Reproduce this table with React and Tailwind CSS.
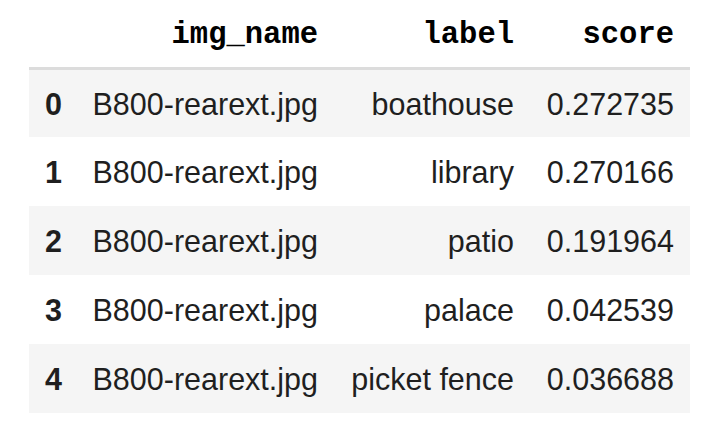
const rows = [
  ['0', 'B800-rearext.jpg', 'boathouse', '0.272735'],
  ['1', 'B800-rearext.jpg', 'library', '0.270166'],
  ['2', 'B800-rearext.jpg', 'patio', '0.191964'],
  ['3', 'B800-rearext.jpg', 'palace', '0.042539'],
  ['4', 'B800-rearext.jpg', 'picket fence', '0.036688'],
];

function App() {
  return (
    <main className="w-[702px] h-[428px] bg-white pl-[29px] font-['Liberation_Sans',Arial,sans-serif] text-[#1f1f1f]">
      <table className="w-[661px] border-collapse table-fixed">
        <colgroup>
          <col className="w-[49px]" />
          <col className="w-[256px]" />
          <col className="w-[196px]" />
          <col className="w-[160px]" />
        </colgroup>
        <thead>
          <tr className="h-[68px] border-b-[3px] border-[#dcdcdc] font-['Liberation_Mono','Courier_New',monospace] text-[30.5px] font-bold text-black">
            <th />
            <th className="text-right pr-4 pt-[6px] font-bold">img_name</th>
            <th className="text-right pr-4 pt-[6px] font-bold">label</th>
            <th className="text-right pr-4 pt-[6px] font-bold">score</th>
          </tr>
        </thead>
        <tbody className="text-[30.5px]">
          {rows.map((r, i) => (
            <tr key={r[0]} className={i % 2 === 0 ? 'h-[69px] bg-[#f5f5f5]' : 'h-[69px] bg-white'}>
              <th className="text-left pl-4 pt-[3px] font-bold">{r[0]}</th>
              <td className="text-right pr-4 pt-[3px]">{r[1]}</td>
              <td className="text-right pr-4 pt-[3px]">{r[2]}</td>
              <td className="text-right pr-4 pt-[3px]">{r[3]}</td>
            </tr>
          ))}
        </tbody>
      </table>
    </main>
  );
}

export default App;
